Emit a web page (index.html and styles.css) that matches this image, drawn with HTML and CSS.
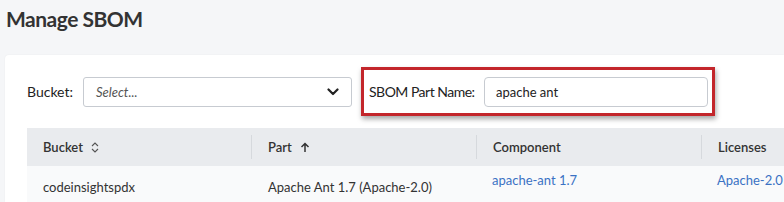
FILE: index.html
```html
<!DOCTYPE html>
<html>
<head>
<meta charset="utf-8">
<link rel="stylesheet" href="styles.css">
</head>
<body>
<div class="page">
  <h1 class="title">Manage SBOM</h1>
  <div class="card">
    <div class="filters">
      <div class="field">
        <span class="label">Bucket:</span>
        <div class="select">
          <span class="placeholder">Select...</span>
          <svg class="chev" width="12" height="8" viewBox="0 0 12 8"><path d="M1.5 1.5 L6 6 L10.5 1.5" fill="none" stroke="#222" stroke-width="2.2" stroke-linecap="round" stroke-linejoin="round"/></svg>
        </div>
      </div>
      <div class="field highlight">
        <span class="label tight">SBOM Part Name:</span>
        <div class="input">apache ant</div>
      </div>
    </div>
    <div class="table">
      <div class="thead">
        <div class="th c1">Bucket <svg class="sort" width="8" height="11" viewBox="0 0 8 11"><path d="M1 4 L4 1 L7 4 M1 7 L4 10 L7 7" fill="none" stroke="#555" stroke-width="1.1"/></svg></div>
        <div class="th c2">Part <svg class="sort" width="10" height="11" viewBox="0 0 10 11"><path d="M5 10 V1.5 M1.5 5 L5 1.5 L8.5 5" fill="none" stroke="#333" stroke-width="1.5"/></svg></div>
        <div class="th c3">Component</div>
        <div class="th c4">Licenses</div>
      </div>
      <div class="row">
        <div class="td c1">codeinsightspdx</div>
        <div class="td c2">Apache Ant 1.7 (Apache-2.0)</div>
        <div class="td c3"><a>apache-ant 1.7</a></div>
        <div class="td c4"><a>Apache-2.0</a></div>
      </div>
    </div>
  </div>
</div>
</body>
</html>
```
FILE: styles.css
```css
html, body { margin: 0; padding: 0; }
body {
  background: #f5f6f8;
  font-family: "Source Sans Pro", Lato, "Liberation Sans", sans-serif;
  color: #222;
  width: 784px;
  height: 202px;
  overflow: hidden;
}
.page { padding: 0 0 0 5px; overflow: hidden; }
.title {
  margin: 0;
  padding: 6px 0 0 1px;
  height: 55px;
  box-sizing: border-box;
  font-size: 21px;
  font-weight: 700;
  color: #333;
  letter-spacing: -0.5px;
}
.card {
  background: #fff;
  border-radius: 4px 0 0 0;
  padding: 11px 0 0 22px;
  height: 147px;
  box-sizing: border-box;
  overflow: hidden;
  box-shadow: 0 0 2px rgba(0,0,0,0.05);
}
.filters {
  display: flex;
  align-items: center;
  height: 51px;
}
.field { display: flex; align-items: center; flex-shrink: 0; }
.label { font-size: 14px; color: #222; white-space: nowrap; }
.label.tight { letter-spacing: -0.5px; }
.select {
  margin-left: 10px;
  width: 269px;
  height: 30px;
  box-sizing: border-box;
  border: 1px solid #c7cbd1;
  border-radius: 3px;
  display: flex;
  align-items: center;
  justify-content: space-between;
  padding: 0 12px 0 12px;
}
.placeholder { font-style: italic; font-size: 13px; color: #555; }
.highlight {
  margin-left: 9px;
  border: 3px solid #c3262b;
  height: 49px;
  width: 354px;
  box-sizing: border-box;
  padding: 0 4px 0 5px;
  box-shadow: 1px 3px 5px rgba(0,0,0,0.35);
  justify-content: space-between;
}
.input {
  width: 224px;
  height: 30px;
  box-sizing: border-box;
  border: 1px solid #c7cbd1;
  border-radius: 4px;
  font-size: 13px;
  padding: 0 11px;
  display: flex;
  align-items: center;
  color: #222;
}
.table { margin-top: 11px; }
.thead {
  display: flex;
  background: #e9ebee;
  height: 38px;
  align-items: center;
}
.th {
  font-size: 13px;
  font-weight: 600;
  color: #333;
  display: flex;
  align-items: center;
  gap: 8px;
  height: 24px;
  box-sizing: border-box;
  padding-left: 16px;
  flex-shrink: 0;
}
.th + .th { border-left: 1px solid #d6d9dd; }
.c1 { width: 224px; flex-shrink: 0; }
.c2 { width: 225px; flex-shrink: 0; }
.c3 { width: 225px; flex-shrink: 0; }
.c4 { width: 100px; flex-shrink: 0; }
.row {
  display: flex;
  background: #f9fafb;
  height: 36px;
  padding-top: 6px;
  box-sizing: border-box;
}
.td {
  font-size: 13px;
  color: #333;
  padding-left: 16px;
  box-sizing: border-box;
}
.row .c2 { padding-left: 17px; padding-top: 7px; }
.row .c1 { padding-top: 7px; }
.td a { color: #3b72c4; text-decoration: none; }
```
